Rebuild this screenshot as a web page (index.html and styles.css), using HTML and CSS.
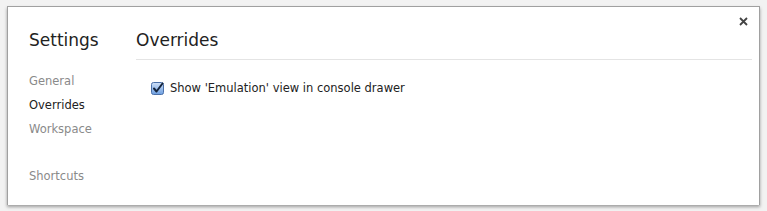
FILE: index.html
```html
<!DOCTYPE html>
<html>
<head>
<meta charset="utf-8">
<link rel="stylesheet" href="styles.css">
</head>
<body>
<div class="page">
  <div class="dialog">
    <div class="sidebar">
      <div class="title">Settings</div>
      <ul class="tabs">
        <li class="tab">General</li>
        <li class="tab selected">Overrides</li>
        <li class="tab">Workspace</li>
        <li class="tab spacer"></li>
        <li class="tab">Shortcuts</li>
      </ul>
    </div>
    <div class="content">
      <div class="header">Overrides</div>
      <label class="option">
        <span class="checkbox">
          <svg width="13" height="13" viewBox="0 0 13 13">
            <defs>
              <linearGradient id="g" x1="0" y1="0" x2="0" y2="1">
                <stop offset="0" stop-color="#cfe0f7"/>
                <stop offset="1" stop-color="#6c9ee0"/>
              </linearGradient>
            </defs>
            <rect x="0.5" y="0.5" width="12" height="12" rx="2" fill="url(#g)" stroke="#4a6fa8"/>
            <path d="M3 6.5 L5.5 9.5 L11.5 1.5" fill="none" stroke="#14243c" stroke-width="2" stroke-linecap="round" stroke-linejoin="round"/>
          </svg>
        </span>
        <span class="label">Show 'Emulation' view in console drawer</span>
      </label>
    </div>
    <div class="close">
      <svg width="9" height="9" viewBox="0 0 9 9"><path d="M1 1 L8 8 M8 1 L1 8" stroke="#444" stroke-width="1.8"/></svg>
    </div>
  </div>
</div>
</body>
</html>
```
FILE: styles.css
```css
html, body {
  margin: 0;
  padding: 0;
}
body {
  background: #f2f2f2;
  width: 767px;
  height: 211px;
  overflow: hidden;
  font-family: "DejaVu Sans", sans-serif;
}
.page {
  padding: 6px 0 0 7px;
}
.dialog {
  position: relative;
  box-sizing: border-box;
  width: 753px;
  height: 199px;
  background: #fff;
  border: 1px solid #a0a0a0;
  border-bottom: none;
  box-shadow: 0 2px 3px rgba(0, 0, 0, 0.35);
  display: flex;
}
.sidebar {
  width: 128px;
  padding-left: 21px;
  box-sizing: border-box;
  flex: none;
}
.title {
  font-size: 17px;
  color: #222;
  margin-top: 22px;
  line-height: 22px;
}
.tabs {
  list-style: none;
  margin: 18px 0 0 0;
  padding: 0;
}
.tab {
  font-size: 11.5px;
  line-height: 24px;
  height: 24px;
  color: #8a8a8a;
}
.tab.selected {
  color: #222;
}
.tab.spacer {
  height: 23px;
}
.content {
  flex: 1;
  padding-right: 7px;
}
.header {
  font-size: 17px;
  color: #222;
  margin-top: 22px;
  line-height: 22px;
  padding-bottom: 8px;
  border-bottom: 1px solid #e4e4e4;
}
.option {
  display: flex;
  align-items: center;
  margin: 21px 0 0 15px;
  font-size: 11.5px;
  color: #222;
}
.checkbox {
  display: flex;
  width: 13px;
  height: 13px;
  margin-right: 6px;
}
.close {
  position: absolute;
  top: 10px;
  right: 11px;
  width: 9px;
  height: 9px;
  display: flex;
}
```
